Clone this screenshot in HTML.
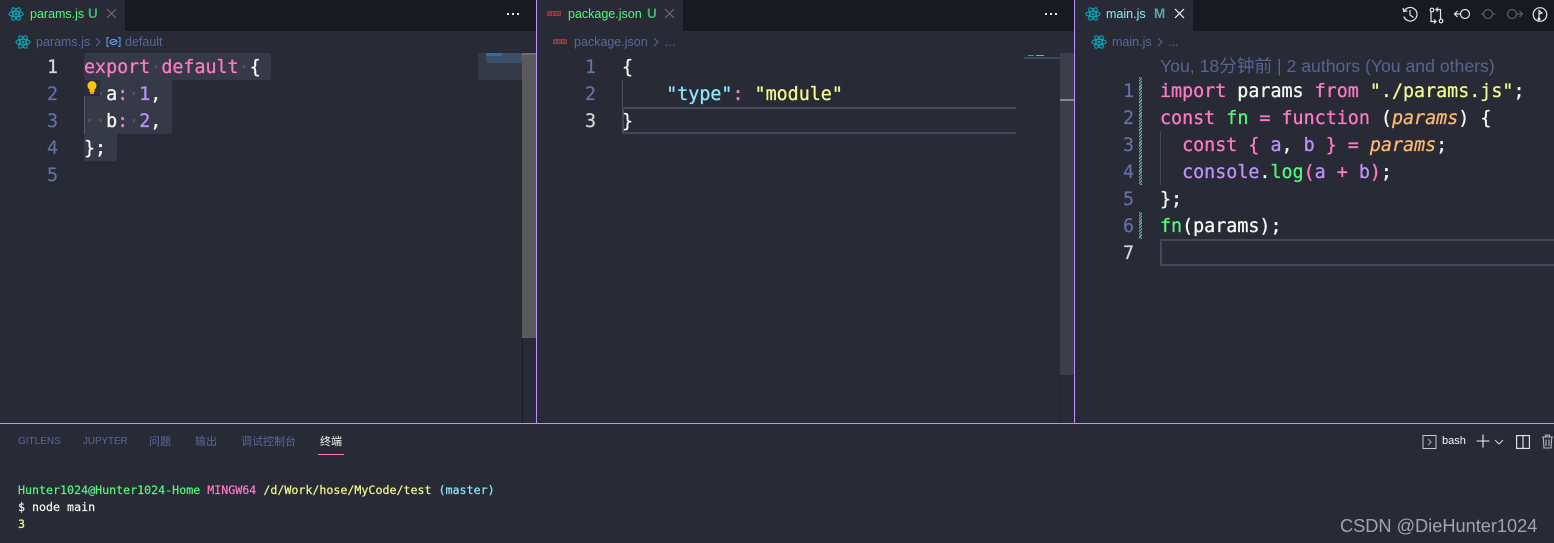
<!DOCTYPE html>
<html>
<head>
<meta charset="utf-8">
<style>
html,body{margin:0;padding:0;background:#282a36;}
#r{position:relative;width:1554px;height:543px;overflow:hidden;background:#282a36;font-family:"Liberation Sans","Noto Sans CJK SC",sans-serif;}
#r div,#r svg{position:absolute;}
.b{background:#191a21;}
.t{font-size:12.5px;line-height:18px;white-space:pre;}
.v{font-size:13.5px;font-weight:bold;line-height:18px;white-space:pre;}
.c{font-family:"DejaVu Sans Mono",monospace;font-size:18.35px;line-height:27px;height:27px;padding-top:1px;white-space:pre;color:#f8f8f2;-webkit-text-stroke:.3px currentColor;}
.n{font-family:"DejaVu Sans Mono",monospace;font-size:18.35px;line-height:27px;height:27px;padding-top:1px;width:30px;text-align:right;color:#6272a4;-webkit-text-stroke:.2px currentColor;}
.m{font-family:"DejaVu Sans Mono",monospace;font-size:11.65px;line-height:17px;height:17px;padding-top:1px;white-space:pre;color:#f8f8f2;-webkit-text-stroke:.2px currentColor;}
.p{font-size:11px;line-height:14px;white-space:pre;color:#5a6899;}
.k{color:#ff79c6}.g{color:#50fa7b}.s{color:#f1fa8c}.o{color:#ffb86c;font-style:italic}.u{color:#bd93f9}.y{color:#8be9fd}.d{color:#4f5263}
</style>
</head>
<body>
<div id="r">
<svg width="0" height="0" style="left:0;top:0"><defs>
<g id="atom" fill="none" stroke="#0aa5b5" stroke-width="1.1"><ellipse cx="8" cy="8" rx="7" ry="2.8"/><ellipse cx="8" cy="8" rx="7" ry="2.8" transform="rotate(60 8 8)"/><ellipse cx="8" cy="8" rx="7" ry="2.8" transform="rotate(120 8 8)"/><circle cx="8" cy="8" r="1.3" fill="#0aa5b5" stroke="none"/></g>
<g id="npm"><rect x="0" y="0" width="14" height="5" fill="#a8323c"/><path d="M1.5 1.2v2.6M3 1.2v2.6M5.5 1.2v3.6M7 1.2v2.6M9.5 1.2v2.6M11 1.2v2.6M12.5 1.2v2.6" stroke="#282a36" stroke-width=".7"/></g>
</defs></svg>

<!-- tab bars -->
<div class="b" style="left:0;top:0;width:1554px;height:31px"></div>
<div style="left:0;top:0;width:125px;height:31px;background:#282a36"></div>
<div style="left:537px;top:0;width:146px;height:31px;background:#282a36"></div>
<div style="left:1075px;top:0;width:118px;height:31px;background:#282a36"></div>

<!-- sashes -->
<div style="left:536px;top:0;width:1px;height:423px;background:#bd93f9"></div>
<div style="left:1074px;top:0;width:1px;height:423px;background:#bd93f9"></div>
<div style="left:0;top:423px;width:1554px;height:1px;background:#bd93f9"></div>

<!-- tabs pane 1 -->
<svg style="left:8px;top:6px" width="16" height="16" viewBox="0 0 16 16"><use href="#atom"/></svg>
<div class="t" style="left:30px;top:5px;color:#50fa7b">params.js</div>
<div class="v" style="left:88px;top:5px;color:#3fb56a">U</div>
<svg style="left:106px;top:8px" width="11" height="11" viewBox="0 0 11 11"><path d="M1 1l9 9M10 1l-9 9" stroke="#6b6d78" stroke-width="1.2" fill="none"/></svg>
<div style="left:512px;top:13px;width:2px;height:2px;background:#e8e8e2;box-shadow:5px 0 #e8e8e2,-5px 0 #e8e8e2"></div>

<!-- tabs pane 2 -->
<svg style="left:547px;top:11px" width="14" height="6" viewBox="0 0 14 6"><use href="#npm"/></svg>
<div class="t" style="left:568px;top:5px;color:#50fa7b">package.json</div>
<div class="v" style="left:647px;top:5px;color:#3fb56a">U</div>
<svg style="left:664px;top:8px" width="11" height="11" viewBox="0 0 11 11"><path d="M1 1l9 9M10 1l-9 9" stroke="#6b6d78" stroke-width="1.2" fill="none"/></svg>
<div style="left:1050px;top:13px;width:2px;height:2px;background:#e8e8e2;box-shadow:5px 0 #e8e8e2,-5px 0 #e8e8e2"></div>

<!-- tabs pane 3 -->
<svg style="left:1085px;top:6px" width="16" height="16" viewBox="0 0 16 16"><use href="#atom"/></svg>
<div class="t" style="left:1106px;top:5px;color:#8be9fd">main.js</div>
<div class="v" style="left:1154px;top:5px;color:#5fa5b0">M</div>
<svg style="left:1174px;top:8px" width="11" height="11" viewBox="0 0 11 11"><path d="M1 1l9 9M10 1l-9 9" stroke="#f8f8f2" stroke-width="1.2" fill="none"/></svg>

<!-- top right icons -->
<svg style="left:1400px;top:4px" width="154" height="22" viewBox="0 0 154 22" fill="none" stroke-width="1.2">
<g stroke="#e6e6e6"><path d="M3 4l.8 3.500 3.500-.6"/><path d="M4 7.500a6.800 6.800 0 1 1-.2 5"/><path d="M10 6v5l3.500 2.500"/></g>
<g stroke="#e6e6e6"><circle cx="32" cy="6" r="1.800"/><circle cx="41" cy="17" r="1.800"/><path d="M31 8v9.500h4.500M34 15.500l2 2-2 2M40.500 15V5.500H36M38 3.500l-2 2 2 2"/></g>
<g stroke="#e6e6e6"><circle cx="65" cy="10" r="4.500"/><path d="M60.500 10H54.500M57.500 7l-3 3 3 3"/></g>
<g stroke="#5b5d68"><circle cx="88" cy="10" r="4.500"/><path d="M81 10h2.500M92.500 10h3"/></g>
<g stroke="#5b5d68"><circle cx="112" cy="10" r="4.500"/><path d="M116.500 10h5.500M119.500 7l3 3-3 3"/></g>
<g stroke="#e6e6e6"><circle cx="140" cy="10.500" r="6.800"/><path d="M139 15V6.500l3 2.500-3 1"/><circle cx="139" cy="15" r=".9" fill="#e6e6e6"/></g>
</svg>

<!-- breadcrumbs -->
<svg style="left:15px;top:34px" width="16" height="16" viewBox="0 0 16 16"><use href="#atom"/></svg>
<div class="t" style="left:36px;top:33px;color:#5a6899">params.js</div>
<svg style="left:95px;top:37px" width="6" height="10" viewBox="0 0 6 10"><path d="M1 1l4 4-4 4" stroke="#5a6899" fill="none"/></svg>
<svg style="left:106px;top:37px" width="15" height="10" viewBox="0 0 15 10" fill="none" stroke="#5da3e8" stroke-width="1.1"><path d="M3 .7H1v8.600h2M12 .7h2v8.600h-2"/><ellipse cx="7.500" cy="5" rx="3.500" ry="2.600"/><path d="M5 6l5-2"/></svg>
<div class="t" style="left:125px;top:33px;color:#5a6899">default</div>

<svg style="left:553px;top:39px" width="14" height="6" viewBox="0 0 14 6"><use href="#npm"/></svg>
<div class="t" style="left:574px;top:33px;color:#5a6899">package.json</div>
<svg style="left:653px;top:37px" width="6" height="10" viewBox="0 0 6 10"><path d="M1 1l4 4-4 4" stroke="#5a6899" fill="none"/></svg>
<div class="t" style="left:665px;top:33px;color:#5a6899">...</div>

<svg style="left:1157px;top:37px" width="6" height="10" viewBox="0 0 6 10"><path d="M1 1l4 4-4 4" stroke="#5a6899" fill="none"/></svg>
<svg style="left:1091px;top:34px" width="16" height="16" viewBox="0 0 16 16"><use href="#atom"/></svg>
<div class="t" style="left:1112px;top:33px;color:#5a6899">main.js</div>
<div class="t" style="left:1168px;top:33px;color:#5a6899">...</div>

<!-- pane 1 highlight -->
<div style="left:478px;top:53px;width:44px;height:27px;background:#363947"></div>
<div style="left:486px;top:53px;width:36px;height:10px;background:#3a5069"></div>
<div style="left:486px;top:53px;width:16px;height:3px;background:#3f6a94"></div>
<div style="left:84px;top:53px;width:187px;height:27px;background:#363947;border-radius:3px"></div>
<div style="left:84px;top:80px;width:88px;height:54px;background:#363947;border-radius:0 0 3px 0"></div>
<div style="left:84px;top:134px;width:33px;height:27px;background:#363947;border-radius:0 0 3px 0"></div>
<div style="left:84px;top:80px;width:1px;height:54px;background:#5b5d68"></div>

<div class="n" style="left:28px;top:53px;color:#d8d8d4">1</div>
<div class="n" style="left:28px;top:80px">2</div>
<div class="n" style="left:28px;top:107px">3</div>
<div class="n" style="left:28px;top:134px">4</div>
<div class="n" style="left:28px;top:161px">5</div>

<div class="c" style="left:84px;top:53px"><span class="k">export</span><span class="d">·</span><span class="k">default</span><span class="d">·</span>{</div>
<div class="c" style="left:84px;top:80px"><span class="d">··</span>a<span class="k">:</span><span class="d">·</span><span class="u">1</span>,</div>
<div class="c" style="left:84px;top:107px"><span class="d">··</span>b<span class="k">:</span><span class="d">·</span><span class="u">2</span>,</div>
<div class="c" style="left:84px;top:134px">};</div>
<svg style="left:84px;top:80px" width="16" height="16" viewBox="0 0 16 16"><rect width="16" height="16" fill="#2b2d39"/><path d="M5.500 9.500C4 8.500 3.500 7 3.500 5.500a4.500 4.500 0 0 1 9 0c0 1.500-.5 3-2 4v2.500h-5z" fill="#ffc400"/><rect x="6" y="12" width="4" height="2" fill="#d9a400"/></svg>

<!-- scrollbar pane 1 -->
<div style="left:522px;top:53px;width:14px;height:370px;background:#282a36;border-left:1px solid #191a21;box-sizing:border-box"></div>
<div style="left:522px;top:53px;width:14px;height:285px;background:#5a5a5c"></div>
<div style="left:522px;top:53px;width:14px;height:2px;background:#6e6e70"></div>

<!-- pane 2 -->
<div class="n" style="left:566px;top:53px">1</div>
<div class="n" style="left:566px;top:80px">2</div>
<div class="n" style="left:566px;top:107px;color:#d8d8d4">3</div>
<div style="left:622px;top:80px;width:1px;height:27px;background:#4a4c5a"></div>
<div style="left:622px;top:107px;width:394px;height:27px;border:2px solid #44475a;border-right:0;box-sizing:border-box"></div>
<div class="c" style="left:622px;top:53px">{</div>
<div class="c" style="left:622px;top:80px">    <span class="y">"type"</span><span class="k">:</span> <span class="s">"module"</span></div>
<div class="c" style="left:622px;top:107px">}</div>

<!-- minimap pane 2 -->
<div style="left:1024px;top:57px;width:36px;height:2px;background:#2f4a63"></div>
<div style="left:1028px;top:55px;width:6px;height:1px;background:#5a8aa0"></div>
<div style="left:1036px;top:55px;width:8px;height:1px;background:#a8a868"></div>
<div style="left:1060px;top:53px;width:14px;height:322px;background:#3d3e4a"></div>
<div style="left:1060px;top:99px;width:14px;height:2px;background:#8a8a8a"></div>
<div style="left:1060px;top:375px;width:1px;height:48px;background:#232530"></div>

<!-- pane 3 -->
<div class="t" style="left:1160px;top:54px;height:24px;font-size:17.65px;line-height:24px;color:#56648f">You, 18分钟前 | 2 authors (You and others)</div>
<div style="left:1139px;top:77px;width:3px;height:108px;background:repeating-linear-gradient(135deg,#6fb0b0 0 1.200px,#2c3b46 1.200px 2.200px)"></div>
<div style="left:1139px;top:212px;width:3px;height:27px;background:repeating-linear-gradient(135deg,#6fb0b0 0 1.200px,#2c3b46 1.200px 2.200px)"></div>
<div style="left:1160px;top:131px;width:1px;height:54px;background:#44475a"></div>
<div style="left:1160px;top:239px;width:394px;height:27px;border:2px solid #44475a;border-right:0;box-sizing:border-box"></div>

<div class="n" style="left:1104px;top:77px">1</div>
<div class="n" style="left:1104px;top:104px">2</div>
<div class="n" style="left:1104px;top:131px">3</div>
<div class="n" style="left:1104px;top:158px">4</div>
<div class="n" style="left:1104px;top:185px">5</div>
<div class="n" style="left:1104px;top:212px">6</div>
<div class="n" style="left:1104px;top:239px;color:#d8d8d4">7</div>

<div class="c" style="left:1160px;top:77px"><span class="k">import</span> params <span class="k">from</span> <span class="s">"./params.js"</span>;</div>
<div class="c" style="left:1160px;top:104px"><span class="k">const</span> <span class="g">fn</span> <span class="k">=</span> <span class="k">function</span> (<span class="o">params</span>) {</div>
<div class="c" style="left:1160px;top:131px">  <span class="k">const</span> <span class="k">{</span> <span class="u">a</span>, <span class="u">b</span> <span class="k">}</span> <span class="k">=</span> <span class="o">params</span>;</div>
<div class="c" style="left:1160px;top:158px">  <span class="u">console</span>.<span class="g">log</span><span class="k">(</span><span class="u">a</span> <span class="k">+</span> <span class="u">b</span><span class="k">)</span>;</div>
<div class="c" style="left:1160px;top:185px">};</div>
<div class="c" style="left:1160px;top:212px"><span class="g">fn</span>(params);</div>

<!-- panel tabs -->
<div class="p" style="left:18px;top:435px;font-size:10px">GITLENS</div>
<div class="p" style="left:83px;top:435px;font-size:9.800px">JUPYTER</div>
<div class="p" style="left:149px;top:435px">问题</div>
<div class="p" style="left:195px;top:435px">输出</div>
<div class="p" style="left:241px;top:435px">调试控制台</div>
<div class="p" style="left:320px;top:435px;color:#f8f8f2">终端</div>
<div style="left:318px;top:454px;width:26px;height:1px;background:#ff79c6"></div>

<!-- panel right icons -->
<svg style="left:1422px;top:434px" width="16" height="16" viewBox="0 0 16 16" fill="none"><rect x="1" y="1.500" width="13" height="13" stroke="#c8c8c8" stroke-width="1"/><path d="M6 5l3 3-3 3" stroke="#a0a0a0" stroke-width="1.200"/></svg>
<div class="p" style="left:1442px;top:434px;color:#f8f8f2">bash</div>
<svg style="left:1476px;top:434px" width="14" height="14" viewBox="0 0 14 14"><path d="M7 0.500v13M0.500 7h13" stroke="#f0f0f0" stroke-width="1.100"/></svg>
<svg style="left:1494px;top:439px" width="10" height="6" viewBox="0 0 10 6"><path d="M1 1l4 4 4-4" stroke="#d8d8d8" fill="none"/></svg>
<svg style="left:1516px;top:435px" width="14" height="14" viewBox="0 0 14 14" fill="none" stroke="#f0f0f0" stroke-width="1.100"><rect x=".6" y=".6" width="12.800" height="12.800"/><path d="M7 .6v12.800"/></svg>
<svg style="left:1541px;top:434px" width="13" height="15" viewBox="0 0 13 15" fill="none" stroke="#b8b8b8" stroke-width="1.100"><path d="M1 3h11M4.500 3V1.200h4V3M2.200 3l.8 11h7l.8-11M5 5.500v6.500M8 5.500v6.500"/></svg>

<!-- terminal -->
<div class="m" style="left:18px;top:481px"><span class="g">Hunter1024@Hunter1024-Home</span> <span class="k">MINGW64</span> <span class="s">/d/Work/hose/MyCode/test</span> <span class="y">(master)</span></div>
<div class="m" style="left:18px;top:498px">$ node main</div>
<div class="m" style="left:18px;top:515px"><span class="s">3</span></div>

<!-- watermark -->
<div style="left:1340px;top:515px;font-size:18.2px;line-height:22px;color:#a3a4a8;white-space:pre">CSDN @DieHunter1024</div>
</div>
</body>
</html>
